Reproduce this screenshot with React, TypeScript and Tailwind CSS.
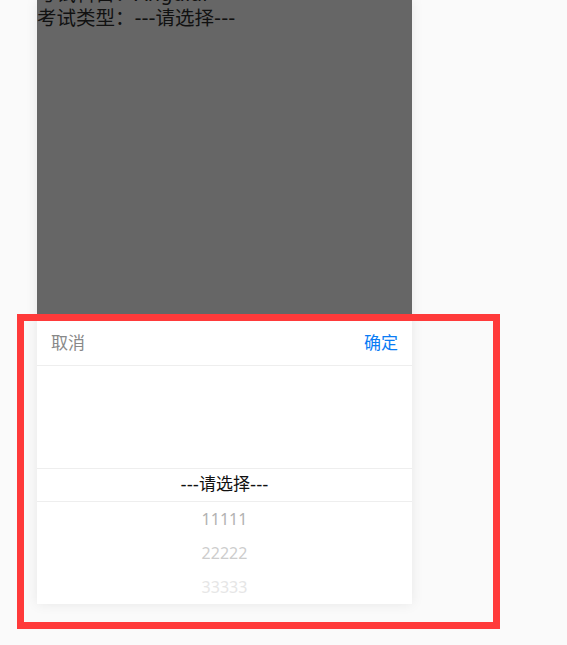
import React from "react";

export default function App() {
  const font = { fontFamily: '"Noto Sans", "Noto Sans CJK SC", sans-serif' };
  const dash = { fontFamily: '"DejaVu Sans", "Noto Sans CJK SC", sans-serif' };
  return (
    <div className="relative h-[645px] w-[567px] overflow-hidden bg-[#fafafa]" style={font}>
      <div className="ml-[37px] flex h-[604px] w-[375px] flex-col overflow-hidden bg-white shadow-[0_0_12px_rgba(0,0,0,0.08)]">
        <div className="flex-1 overflow-hidden bg-[#666666]">
          <div className="-mt-[17px] text-[19.5px] leading-[24px] text-[#111]" style={dash}>
            <div>考试科目：Angular</div>
            <div>考试类型：---请选择---</div>
          </div>
        </div>
        <div className="h-[284px] bg-white">
          <div className="flex h-[46px] items-center justify-between border-b border-[#eeeeee] px-[14px] text-[17px]">
            <span className="text-[#888888]">取消</span>
            <span className="text-[#0a7cf5]">确定</span>
          </div>
          <div className="flex flex-col text-center text-[16px]">
            <div className="h-[102px]" />
            <div
              className="flex h-[34px] items-center justify-center border-y border-[#eeeeee] text-[17px] text-[#111]"
              style={dash}
            >
              ---请选择---
            </div>
            <div className="flex h-[34px] items-center justify-center text-[#b2b2b2]">11111</div>
            <div className="flex h-[34px] items-center justify-center text-[#cdcdcd]">22222</div>
            <div className="flex h-[34px] items-center justify-center text-[#e6e6e6]">33333</div>
          </div>
        </div>
      </div>
      <div className="pointer-events-none absolute left-[17px] top-[314px] h-[315px] w-[483px] border-[7px] border-[#ff3a3a]" />
    </div>
  );
}
